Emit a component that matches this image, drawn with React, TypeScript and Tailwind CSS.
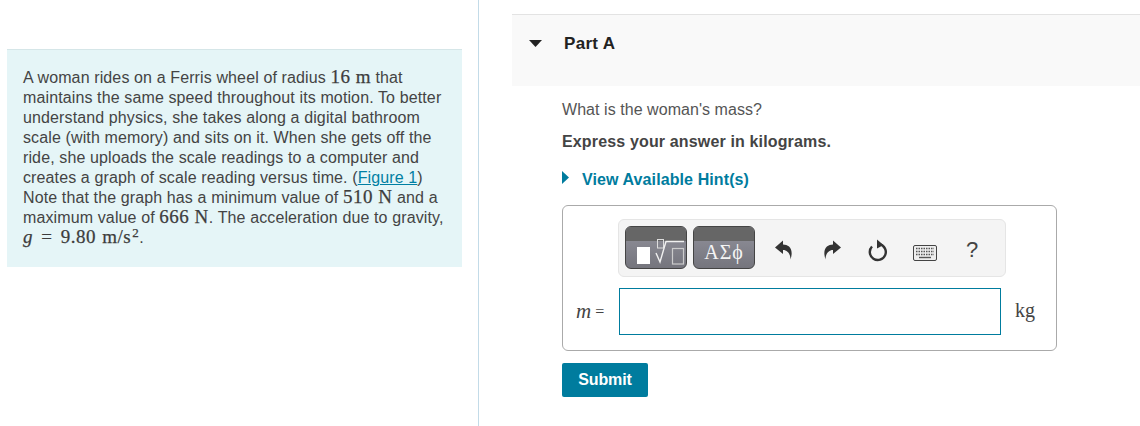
import React from "react";

const sans = "font-['Liberation_Sans',Arial,sans-serif]";
const M = ({ children }: { children: React.ReactNode }) => (
  <span className="whitespace-nowrap font-['Liberation_Serif',serif] text-[19px] font-medium leading-[14px] tracking-[0.5px] text-[#3d3d3d] [-webkit-text-stroke:0.25px_#3d3d3d]">{children}</span>
);

function Undo({ flip = false }: { flip?: boolean }) {
  return (
    <svg width="18" height="20" viewBox="0 0 18 20" className={flip ? "-scale-x-100" : ""}>
      <path d="M0 7.5 L8 0.5 V4.5 C14 4.5 19 9 15.5 19.5 C15.5 14 12.5 10 8 10 V14 Z" fill="#333" />
    </svg>
  );
}

function Reset() {
  return (
    <svg width="22" height="24" viewBox="0 0 22 24">
      <path d="M12.5 5.2 A8 8 0 1 1 5 7.5" fill="none" stroke="#333" strokeWidth="2.4" />
      <path d="M10 0.5 L16.5 6 L10 9.5 Z" fill="#333" />
    </svg>
  );
}

function Keyboard() {
  return (
    <svg width="24" height="16" viewBox="0 0 24 16">
      <rect x="0.5" y="0.5" width="23" height="15" rx="1.5" fill="#eee" stroke="#444" />
      <path d="M3 3.5H21M3 6.5H21M3 9.5H21" stroke="#555" strokeWidth="1.4" strokeDasharray="1.5 1" />
      <path d="M6 12.5H18" stroke="#555" strokeWidth="1.4" />
    </svg>
  );
}

function TemplateGlyph() {
  return (
    <svg width="60" height="41" viewBox="0 0 60 41" className="absolute left-0 top-0">
      <rect x="11" y="20" width="13" height="17" fill="#fff" />
      <rect x="31.5" y="12.5" width="6" height="8.5" fill="none" stroke="#ddd" strokeWidth="1" />
      <path d="M30 26 L34 35 L40 14.5 H58" fill="none" stroke="#f0f0f0" strokeWidth="1.4" />
      <rect x="46.5" y="21.5" width="11" height="15.5" fill="none" stroke="#ccc" strokeWidth="1.2" />
    </svg>
  );
}

const toolBtn =
  "relative mt-[6px] h-[43px] w-[62px] overflow-hidden rounded-[6px] border border-[#444] bg-gradient-to-b from-[#92929c] to-[#75757d]";

export default function App() {
  return (
    <div className={`${sans} flex h-[426px] w-[1140px] overflow-hidden bg-white text-[#444]`}>
      <div className="h-full w-[479px] shrink-0 border-r border-[#c3dbe8] pl-[7px] pr-[16px] pt-[49px]">
        <div className="h-[218px] border-t border-[#d5e6e8] bg-[#e5f5f7] pl-[16px] pr-[14px] pt-[18px] text-[16px] leading-[20px] tracking-[0.12px]">
          A woman rides on a Ferris wheel of radius <M>16 m</M> that maintains the same speed throughout its motion. To better understand physics, she takes along a digital bathroom scale (with memory) and sits on it. When she gets off the ride, she uploads the scale readings to a computer and creates a graph of scale reading versus time. (
          <span className="text-[#007fa3] underline">Figure 1</span>) Note that the graph has a minimum value of <M>510 N</M> and a maximum value of <M>666 N</M>. The acceleration due to gravity, <M><i>g</i><span className="mx-[3px]"> = </span>9.80 <span className="ml-[1px]">m/s</span><sup className="ml-[1px] text-[13px] leading-none">2</sup></M>.
        </div>
      </div>

      <div className="min-w-0 flex-1 pl-[33px] pt-[14px]">
        <div className="flex h-[72px] items-start border-t border-[#e3e3e3] bg-[#f9f9f9] pl-[17px] pt-[19px]">
          <svg width="13" height="7" viewBox="0 0 13 7" className="mt-[6px]">
            <path d="M0 0H13L6.5 7Z" fill="#222" />
          </svg>
          <span className="ml-[22px] text-[17px] font-bold leading-[20px] tracking-[0.3px] text-[#222]">Part A</span>
        </div>

        <div className="ml-[50px] w-[495px]">
          <p className="mt-[14px] text-[16px] leading-[20px] tracking-[0.05px] text-[#555]">What is the woman's mass?</p>
          <p className="mt-[12px] text-[16px] font-bold leading-[20px] tracking-[0.15px] text-[#444]">Express your answer in kilograms.</p>
          <div className="mt-[18px] flex items-center">
            <svg width="7" height="13" viewBox="0 0 7 13" className="-mt-[5px]">
              <path d="M0 0L7 6.5L0 13Z" fill="#007c9e" />
            </svg>
            <span className="ml-[13px] text-[16px] font-bold leading-[20px] tracking-[0.1px] text-[#007c9e]">View Available Hint(s)</span>
          </div>

          <div className="mt-[15px] flex h-[146px] flex-col rounded-[6px] border border-[#aaaaaa] pl-[55px] pt-[13px]">
            <div className="flex h-[58px] w-[388px] items-start rounded-[6px] border border-[#e5e5e5] bg-[#f4f4f4] pl-[6px]">
              <div className={toolBtn}>
                <div className="h-[14px] bg-[#666]" />
                <TemplateGlyph />
              </div>
              <div className={`${toolBtn} ml-[6px]`}>
                <div className="h-[14px] bg-[#666]" />
                <span className="absolute inset-x-0 top-[12px] text-center font-['Liberation_Serif',serif] text-[20px] leading-[26px] tracking-[1px] text-[#f4f4f4]">ΑΣϕ</span>
              </div>
              <div className="ml-[20px] flex items-start">
                <div className="mt-[20px]"><Undo /></div>
                <div className="ml-[30px] mt-[20px]"><Undo flip /></div>
                <div className="ml-[26px] mt-[19px]"><Reset /></div>
                <div className="ml-[24px] mt-[25px]"><Keyboard /></div>
                <span className="ml-[29px] mt-[19px] text-[22px] leading-none text-[#444]">?</span>
              </div>
            </div>
            <div className="mt-[11px] flex items-center">
              <span className="-ml-[42px] flex w-[43px] items-center whitespace-nowrap font-['Liberation_Serif',serif] text-[16px] text-[#444]"><i className="text-[21px] leading-none">m</i><span className="ml-[4px]">=</span></span>
              <div className="h-[47px] w-[382px] border border-[#007c9e] bg-white" />
              <span className="-mt-[3px] ml-[14px] font-['Liberation_Serif',serif] text-[20px] text-[#444]">kg</span>
            </div>
          </div>

          <button className="mt-[12px] h-[34px] w-[86px] rounded-[2px] bg-[#007c9e] text-center text-[16px] font-bold leading-[34px] tracking-[-0.1px] text-white">Submit</button>
        </div>
      </div>
    </div>
  );
}
